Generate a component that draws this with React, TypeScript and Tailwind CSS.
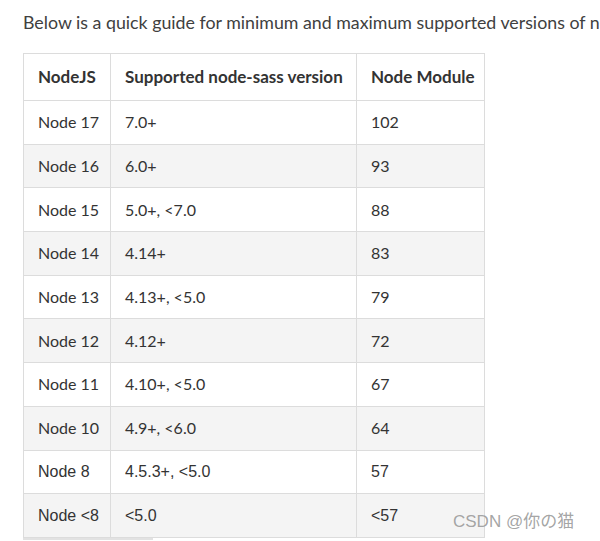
const rows = [
  ['Node 17', '7.0+', '102'],
  ['Node 16', '6.0+', '93'],
  ['Node 15', '5.0+, <7.0', '88'],
  ['Node 14', '4.14+', '83'],
  ['Node 13', '4.13+, <5.0', '79'],
  ['Node 12', '4.12+', '72'],
  ['Node 11', '4.10+, <5.0', '67'],
  ['Node 10', '4.9+, <6.0', '64'],
  ['Node 8', '4.5.3+, <5.0', '57'],
  ['Node <8', '<5.0', '<57'],
]

const cell = 'border border-[#dcdcdc] px-[14px] text-left whitespace-nowrap'

export default function App() {
  return (
    <div
      className="relative h-[541px] w-[600px] overflow-hidden bg-white pl-[23px] pt-[9px] text-[#333]"
      style={{ fontFamily: 'Lato, "Noto Sans", sans-serif' }}
    >
      <p className="whitespace-nowrap text-[17.8px] leading-[26px] text-[#404040]">
        Below is a quick guide for minimum and maximum supported versions of node-sass:
      </p>
      <table className="mt-[18px] w-[461px] table-fixed border-collapse text-[16px]">
        <colgroup>
          <col className="w-[87px]" />
          <col className="w-[246px]" />
          <col className="w-[128px]" />
        </colgroup>
        <thead>
          <tr className="h-[47px] text-[17px]">
            <th className={`font-bold ${cell}`}>NodeJS</th>
            <th className={`font-bold ${cell}`}>Supported node-sass version</th>
            <th className={`font-bold ${cell}`}>Node Module</th>
          </tr>
        </thead>
        <tbody>
          {rows.map((r, i) => (
            <tr
              key={r[0]}
              className={`h-[43.7px] ${i % 2 ? 'bg-[#f4f4f4]' : 'bg-white'}`}
              style={i >= 8 ? { fontFamily: '"Liberation Sans", Arial, sans-serif' } : undefined}
            >
              <td className={cell}>{r[0]}</td>
              <td className={cell}>{r[1]}</td>
              <td className={cell}>{r[2]}</td>
            </tr>
          ))}
        </tbody>
      </table>
      <div className="h-[2px] w-[130px] bg-[#e2e2e2]" />
      <div
        className="absolute left-[453px] top-[509px] text-[17px] text-[#9a9a9a]/90"
        style={{ fontFamily: '"Liberation Sans", "Noto Sans CJK SC", sans-serif' }}
      >
        CSDN @你の猫
      </div>
    </div>
  )
}
